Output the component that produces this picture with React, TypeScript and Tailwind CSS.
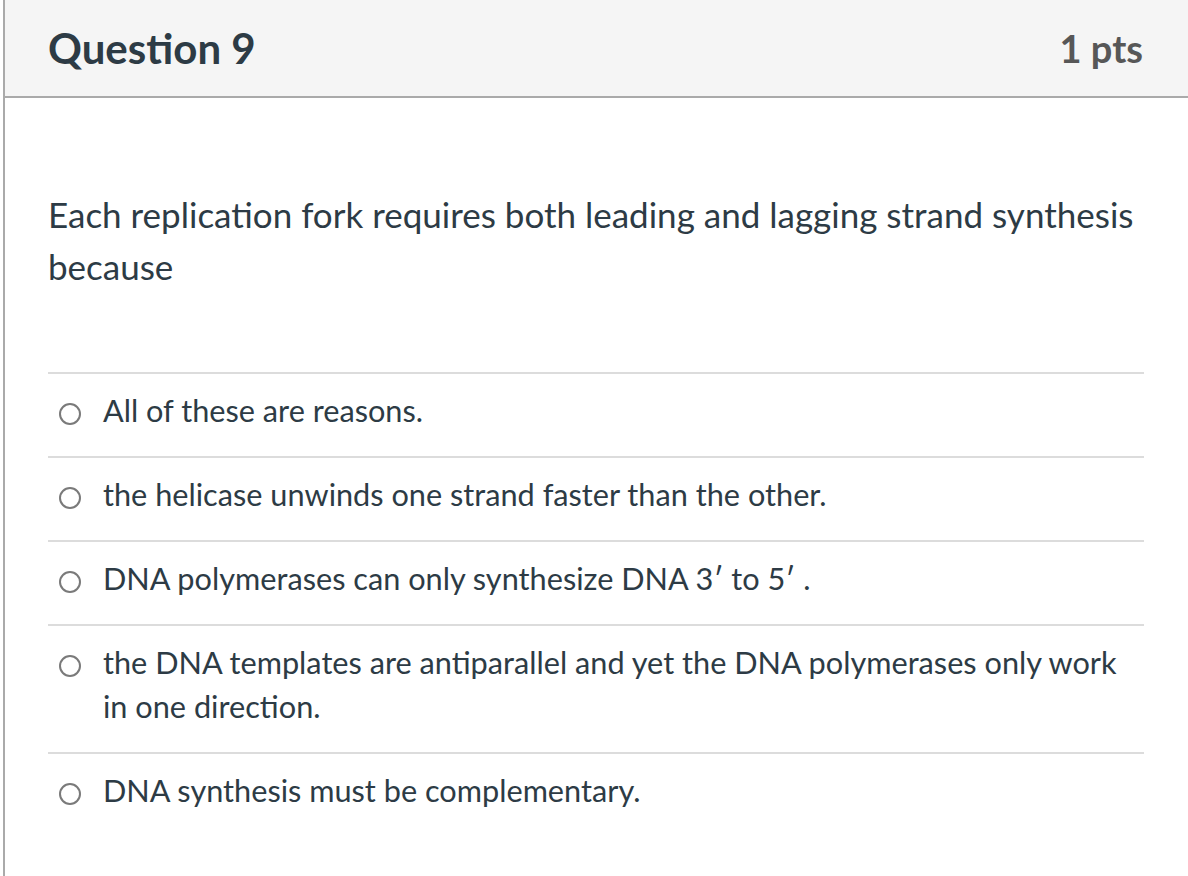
import React from 'react';

const answers = [
    'All of these are reasons.',
    'the helicase unwinds one strand faster than the other.',
    'DNA polymerases can only synthesize DNA 3\u2032 to 5\u2032 .',
    'the DNA templates are antiparallel and yet the DNA polymerases only work in one direction.',
    'DNA synthesis must be complementary.'
];

function Answer({ text }: { text: string }) {
    return (
        <div className="border-t-2 border-[#dcdcdc] pt-[15px] pb-[23px] flex items-start">
            <span className="mt-[14px] ml-[11px] w-[22px] h-[22px] shrink-0 rounded-full border-2 border-[#7a7a7a] bg-white" />
            <span className="ml-[22px] text-[30.7px] leading-[44px] text-[#2d3b45]">{text}</span>
        </div>
    );
}

export default function App() {
    return (
        <div className="min-h-[876px] bg-white pl-[3px] overflow-hidden" style={{ fontFamily: 'Lato, "Noto Sans", sans-serif' }}>
            <div className="border-l-2 border-[#aaaaaa] min-h-[876px]">
                <div className="h-[98px] bg-[#f5f5f5] border-b-2 border-[#aaaaaa] flex items-center justify-between pl-[43px] pr-[45px]">
                    <h2 className="text-[42px] font-bold text-[#2d3b45]">Question 9</h2>
                    <span className="text-[38px] font-bold text-[#575757]">1 pts</span>
                </div>
                <div className="pl-[43px] pr-[44px]">
                    <p className="pt-[90px] pb-[80px] text-[35px] leading-[52px] text-[#2d3b45]">
                        Each replication fork requires both leading and lagging strand synthesis because
                    </p>
                    <div>
                        {answers.map((a) => (
                            <Answer key={a} text={a} />
                        ))}
                    </div>
                </div>
            </div>
        </div>
    );
}
